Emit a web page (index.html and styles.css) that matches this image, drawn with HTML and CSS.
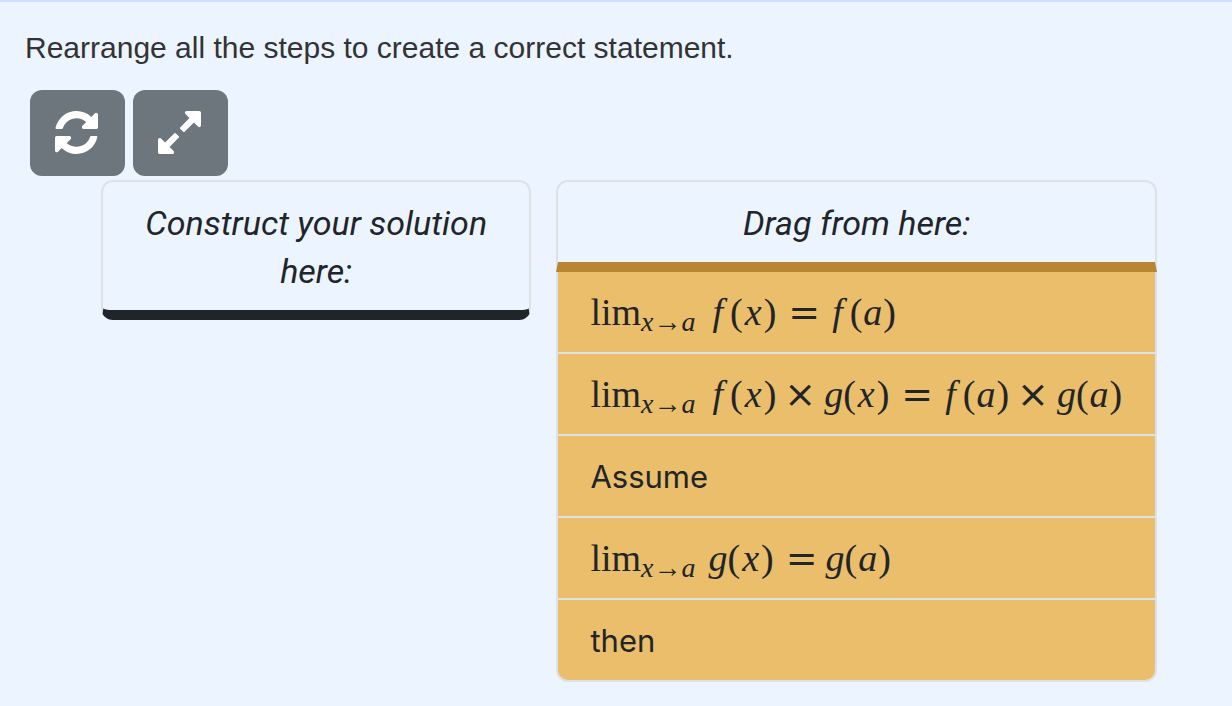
FILE: index.html
```
<!DOCTYPE html>
<html lang="en">
<head>
    <meta charset="UTF-8">
    <meta name="viewport" content="width=device-width, initial-scale=1.0">
    <title>Rearrange the steps</title>
    <link rel="stylesheet" href="styles.css">
</head>
<body>
    <main class="problem">
        <p class="question">Rearrange all the steps to create a correct statement.</p>

        <div class="toolbar">
            <button type="button" aria-label="Reset">
                <svg viewBox="0 0 1536 1536" aria-hidden="true"><path d="M1511 928q0 5-1 7-64 268-268 434.500T764 1536q-146 0-282.500-55T238 1324l-129 129q-19 19-45 19t-45-19-19-45V960q0-26 19-45t45-19h448q26 0 45 19t19 45-19 45l-137 137q71 66 161 102t187 36q134 0 250-65t186-179q11-17 53-117 8-23 30-23h192q13 0 22.500 9.500t9.500 22.500zm25-800v448q0 26-19 45t-45 19h-448q-26 0-45-19t-19-45 19-45l138-138Q969 256 768 256q-134 0-250 65T332 500q-11 17-53 117-8 23-30 23H50q-13 0-22.500-9.500T18 608v-7q65-268 270-434.500T768 0q146 0 284 55.500T1297 212l130-129q19-19 45-19t45 19 19 45z"/></svg>
            </button>
            <button type="button" aria-label="Resize">
                <svg viewBox="0 128 1536 1536" aria-hidden="true"><path d="M755 1056q0 13-10 23l-332 332 144 144q19 19 19 45t-19 45-45 19H64q-26 0-45-19t-19-45v-448q0-26 19-45t45-19 45 19l144 144 332-332q10-10 23-10t23 10l114 114q10 10 10 23zm781-864v448q0 26-19 45t-45 19-45-19l-144-144-332 332q-10 10-23 10t-23-10L791 759q-10-10-10-23t10-23l332-332-144-144q-19-19-19-45t19-45 45-19h448q26 0 45 19t19 45z"/></svg>
            </button>
        </div>

        <div class="columns">
            <ul class="list used">
                <li class="header">Construct your solution here:</li>
            </ul>

            <ul class="list available">
                <li class="header">Drag from here:</li>
                <li class="item formula"><span class="math">lim<sub><i>x</i>→<i>a</i></sub><i class="f">f</i>(<i class="x">x</i>)<span class="rel">=</span><i class="f">f</i>(<i class="a">a</i>)</span></li>
                <li class="item formula"><span class="math">lim<sub><i>x</i>→<i>a</i></sub><i class="f">f</i>(<i class="x">x</i>)<span class="op">×</span><i>g</i>(<i class="x">x</i>)<span class="rel">=</span><i class="f">f</i>(<i class="a">a</i>)<span class="op">×</span><i>g</i>(<i class="a">a</i>)</span></li>
                <li class="item">Assume</li>
                <li class="item formula"><span class="math">lim<sub><i>x</i>→<i>a</i></sub><i>g</i>(<i class="x">x</i>)<span class="rel">=</span><i>g</i>(<i class="a">a</i>)</span></li>
                <li class="item">then</li>
            </ul>
        </div>
    </main>
</body>
</html>
```
FILE: styles.css
```
* {
    box-sizing: border-box;
}
body {
    margin: 0;
    background: #ecf4ff;
    color: #212529;
    font-family: Inter, "Liberation Sans", sans-serif;
    font-size: 31px;
    line-height: 48px;
}
.problem {
    border-top: 2px solid #cfdffb;
    padding: 22px 0 24px;
}
.question {
    margin: 0 25px 18px;
    color: #333;
    font-family: "Liberation Sans", Arial, sans-serif;
    font-size: 30px;
}
.toolbar {
    display: flex;
    gap: 8px;
    padding: 0 30px;
    margin-bottom: 4px;
}
.toolbar button {
    display: flex;
    align-items: center;
    justify-content: center;
    width: 95px;
    height: 86px;
    padding: 0 2px 2px 0;
    border: 0;
    border-radius: 12px;
    background: #6d757d;
    cursor: pointer;
}
.toolbar svg {
    width: 43px;
    height: 43px;
    fill: white;
}
.columns {
    display: grid;
    grid-template-columns: 43fr 60fr;
    align-items: start;
    gap: 25px;
    padding: 0 75px 0 101px;
}
.list {
    margin: 0;
    padding: 0;
    list-style: none;
}
.list li {
    padding: 17px 32px 15px;
    border: 2px solid #dee2e6;
    border-top: 0;
}
.list li:first-child {
    border-top: 2px solid #dee2e6;
    border-top-left-radius: 12px;
    border-top-right-radius: 12px;
}
.list li:last-child {
    border-bottom-left-radius: 12px;
    border-bottom-right-radius: 12px;
}
.list .header {
    font-family: Roboto, "Liberation Sans", sans-serif;
    font-size: 34px;
    font-style: italic;
    text-align: center;
    border-bottom: 10px solid #212529;
}
.available .header {
    border-bottom-color: #ba8530;
}
.item {
    background: #eabe6a;
    cursor: grab;
}
.list .formula {
    padding: 16px 32px;
}

/* formulas */
.math {
    display: block;
    height: 48px;
    font-family: "Liberation Serif", "Times New Roman", serif;
    font-size: 38px;
    white-space: nowrap;
}
.math .f {
    margin: 0 7px 0 4px;
}
.math .x {
    margin: 0 2px;
}
.math .a {
    margin: 0 1px;
}
.math sub {
    margin-right: 13px;
    font-size: 28px;
    line-height: 0;
    vertical-align: -6px;
}
.rel, .op {
    margin: 0 8px 0 12px;
    font-family: "DejaVu Sans", sans-serif;
    line-height: 0;
}
.op {
    margin: 0 8px;
}
```
